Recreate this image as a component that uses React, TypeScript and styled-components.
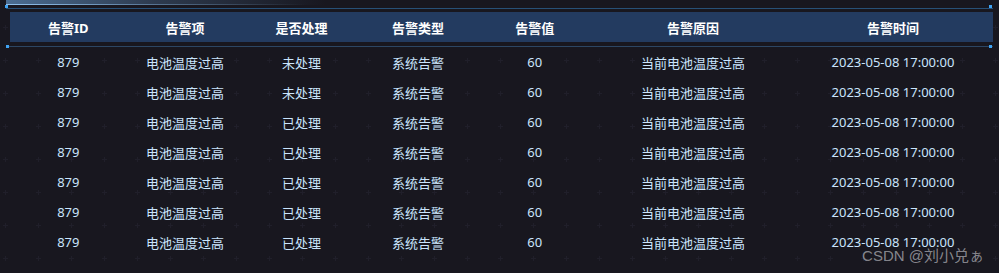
import React from 'react';
import styled, { createGlobalStyle } from 'styled-components';

type Alarm = {
	id: number;
	item: string;
	handled: boolean;
	type: string;
	value: number;
	reason: string;
	time: string;
};

const columns = ['告警ID', '告警项', '是否处理', '告警类型', '告警值', '告警原因', '告警时间'];

const alarms: Alarm[] = [false, false, true, true, true, true, true].map((handled) => ({
	id: 879,
	item: '电池温度过高',
	handled,
	type: '系统告警',
	value: 60,
	reason: '当前电池温度过高',
	time: '2023-05-08 17:00:00',
}));

const App = () => {
	return (
		<>
			<GlobalStyle />
			<Page>
				<Backdrop width="100%" height="100%" aria-hidden>
					<defs>
						<pattern id="cross" width="33" height="33" patternUnits="userSpaceOnUse" x="3" y="25">
							<path d="M0 2.5H5M2.5 0V5" stroke="#201f2a" strokeWidth="1" />
						</pattern>
					</defs>
					<rect width="100%" height="100%" fill="url(#cross)" />
				</Backdrop>
				<Content>
					<Glow />
					<HeadFrame>
						<Corner $v="top" $h="left" />
						<Corner $v="top" $h="right" />
						<Corner $v="bottom" $h="left" />
						<Corner $v="bottom" $h="right" />
						<HeadRow>
							{columns.map((c) => (
								<HeadCell key={c}>{c}</HeadCell>
							))}
						</HeadRow>
					</HeadFrame>
					<Body>
						{alarms.map((a, i) => (
							<Row key={i}>
								<Cell>{a.id}</Cell>
								<Cell>{a.item}</Cell>
								<Cell>{a.handled ? '已处理' : '未处理'}</Cell>
								<Cell>{a.type}</Cell>
								<Cell>{a.value}</Cell>
								<Cell>{a.reason}</Cell>
								<Cell>{a.time}</Cell>
							</Row>
						))}
					</Body>
				</Content>
				<Watermark>CSDN @刘小兑ぁ</Watermark>
			</Page>
		</>
	);
};

export default App;

const GlobalStyle = createGlobalStyle`
	html, body {
		margin: 0;
		background: #18171f;
	}
	body {
		font-family: "Noto Sans", "Noto Sans CJK SC", sans-serif;
	}
`;

const Page = styled.div`
	position: relative;
	min-height: 273px;
	padding: 0 6px 15px 6px;
	box-sizing: border-box;
	overflow: hidden;
`;

const Backdrop = styled.svg`
	position: absolute;
	inset: 0;
	z-index: 0;
`;

const Content = styled.div`
	position: relative;
	z-index: 1;
`;

const Glow = styled.div`
	height: 5px;
	background:
		linear-gradient(90deg, #8fc0ec 0, rgba(143, 192, 236, 0.5) 120px, rgba(143, 192, 236, 0) 300px) left bottom / 100% 1px no-repeat,
		linear-gradient(90deg, rgba(84, 124, 166, 0.85) 0, rgba(84, 124, 166, 0.35) 150px, rgba(84, 124, 166, 0) 320px);
`;

const HeadFrame = styled.div`
	position: relative;
	margin-top: 3px;
	padding: 3px 0 4px 4px;
	border-top: 1px solid #275077;
	border-bottom: 1px solid #2c4664;
`;

const Corner = styled.span<{ $v: 'top' | 'bottom'; $h: 'left' | 'right' }>`
	position: absolute;
	width: 3px;
	height: 3px;
	background: #3fa3f2;
	${(p) => (p.$v === 'top' ? 'top: -4px;' : 'bottom: -2px;')}
	${(p) => (p.$h === 'left' ? (p.$v === 'top' ? 'left: -1px;' : 'left: 0;') : 'right: 1px;')}
`;

const grid = `
	display: grid;
	grid-template-columns: repeat(5, 1fr) 200px 200px;
	align-items: center;
	text-align: center;
`;

const HeadRow = styled.div`
	${grid}
	height: 30px;
	background: #233b60;
`;

const HeadCell = styled.div`
	color: #ffffff;
	font-size: 13px;
	font-weight: 700;
`;

const Body = styled.div`
	padding-left: 4px;
`;

const Row = styled.div`
	${grid}
	height: 30px;
`;

const Cell = styled.div`
	color: #cae5fd;
	font-size: 13px;
`;

const Watermark = styled.div`
	position: absolute;
	right: 15px;
	top: 244px;
	z-index: 2;
	font-family: "Liberation Sans", "Noto Sans CJK SC", sans-serif;
	font-size: 15px;
	color: rgba(205, 205, 212, 0.62);
`;
